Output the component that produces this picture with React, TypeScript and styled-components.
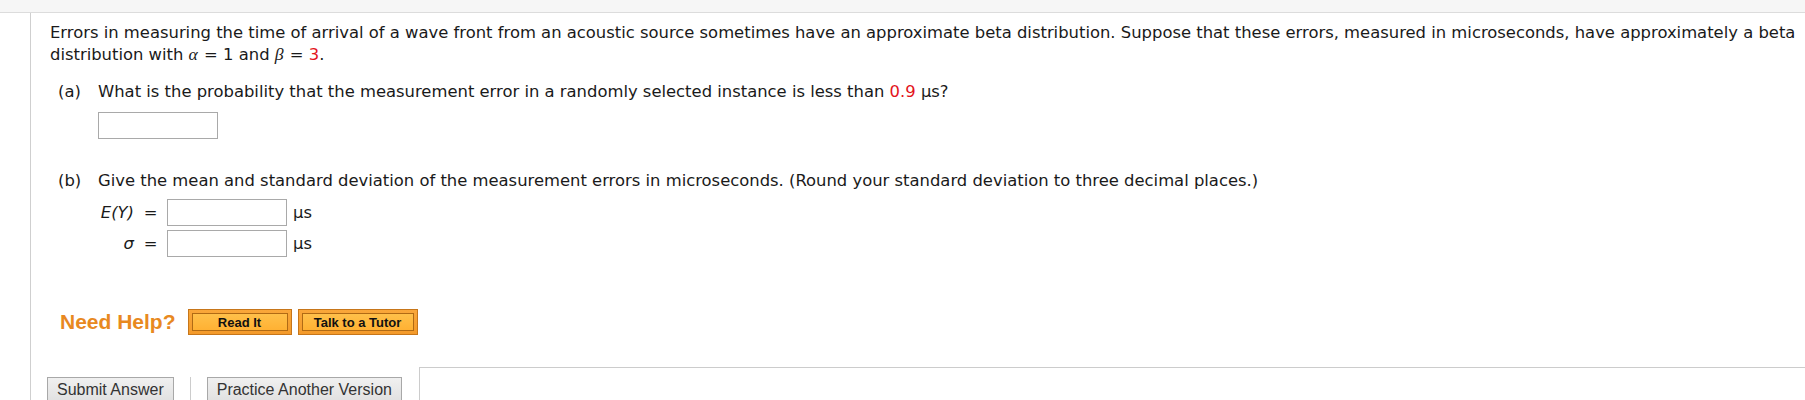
import React from 'react';
import styled, { createGlobalStyle } from 'styled-components';

const GlobalStyle = createGlobalStyle`
  html, body {
    margin: 0;
    padding: 0;
    background: #ffffff;
    overflow: hidden;
  }
  body {
    font-family: "DejaVu Sans", Verdana, sans-serif;
    color: #1a1a1a;
  }
`;

const TopStrip = styled.div`
  height: 12px;
  background: #f6f6f6;
  border-bottom: 1px solid #dcdcdc;
`;

const Main = styled.div`
  display: flex;
  height: 387px;
  overflow: hidden;
`;

const Gutter = styled.div`
  width: 30px;
  flex-shrink: 0;
  border-right: 1px solid #cfcfcf;
`;

const Content = styled.div`
  flex: 1;
  min-width: 0;
  padding: 9px 0 0 19px;
  font-size: 16.4px;
  line-height: 22px;
`;

const Intro = styled.p`
  margin: 0;
`;

const Red = styled.span`
  color: #e3141c;
`;

const Greek = styled.i`
  font-family: "Liberation Serif", "DejaVu Serif", serif;
  font-size: 1.08em;
  line-height: 1;
  padding-right: 1px;
`;

const Part = styled.div<{ $top: number }>`
  display: grid;
  grid-template-columns: 40px 1fr;
  padding-left: 8px;
  margin-top: ${p => p.$top}px;
`;

const PartLabel = styled.div``;

const PartBody = styled.div`
  display: flex;
  flex-direction: column;
  align-items: flex-start;
`;

const AnswerBox = styled.input<{ $top?: number }>`
  box-sizing: border-box;
  width: 120px;
  height: 27px;
  border: 1px solid #a9a9a9;
  margin: ${p => p.$top ?? 0}px 0 0 0;
  padding: 0 4px;
  background: #fff;
  font: inherit;
`;

const AnswerTable = styled.div`
  display: grid;
  grid-template-columns: 36px 33px 120px auto;
  justify-content: start;
  align-items: center;
  row-gap: 4px;
  margin-top: 7px;
`;

const MathLabel = styled.div`
  text-align: right;
  font-style: italic;
  white-space: nowrap;
`;

const Equals = styled.div`
  text-align: center;
`;

const Unit = styled.div`
  padding-left: 6px;
`;

const HelpRow = styled.div`
  display: flex;
  align-items: center;
  margin-top: 52px;
  padding-left: 10px;
  gap: 6px;
`;

const HelpText = styled.span`
  font-family: "Liberation Sans", Arial, sans-serif;
  font-weight: bold;
  font-size: 21px;
  line-height: 26px;
  color: #e8891f;
  margin-right: 6px;
`;

const HelpButton = styled.button<{ $w: number }>`
  box-sizing: border-box;
  width: ${p => p.$w}px;
  height: 26px;
  padding: 3px;
  border: 1px solid #c7761a;
  background: linear-gradient(#f9a73a, #f39a2a);
  cursor: pointer;
  display: flex;
`;

const HelpInner = styled.span`
  flex: 1;
  display: flex;
  align-items: center;
  justify-content: center;
  border: 1px solid #b06a14;
  background: linear-gradient(#ffc04a, #ffb133);
  font-family: "Liberation Sans", Arial, sans-serif;
  font-weight: bold;
  font-size: 13px;
  color: #111;
`;

const ActionRow = styled.div`
  display: flex;
  align-items: flex-start;
  margin-top: 32px;
  margin-left: -3px;
`;

const Actions = styled.div`
  display: flex;
  padding-top: 10px;
`;

const GrayButton = styled.button`
  box-sizing: border-box;
  height: 25px;
  padding: 1px 9px 0;
  border: 1px solid #a8a8a8;
  background: linear-gradient(#f0f0f0, #e1e1e1);
  font-family: "Liberation Sans", Arial, sans-serif;
  font-size: 16px;
  color: #333;
  line-height: 20px;
  cursor: pointer;
`;

const Separator = styled.div`
  width: 1px;
  height: 40px;
  background: #cccccc;
  margin: 0 16px;
`;

const SidePanel = styled.div`
  flex: 1;
  height: 60px;
  margin-left: 17px;
  border-top: 1px solid #cccccc;
  border-left: 1px solid #cccccc;
`;

export default function App() {
  return (
    <>
      <GlobalStyle />
      <TopStrip />
      <Main>
        <Gutter />
        <Content>
          <Intro>
            Errors in measuring the time of arrival of a wave front from an acoustic source sometimes have an
            approximate beta distribution. Suppose that these errors, measured in microseconds, have approximately a beta
            distribution with <Greek>α</Greek> = 1 and <Greek>β</Greek> = <Red>3</Red>.
          </Intro>

          <Part $top={15}>
            <PartLabel>(a)</PartLabel>
            <PartBody>
              <span>
                What is the probability that the measurement error in a randomly selected instance is less than{' '}
                <Red>0.9</Red> μs?
              </span>
              <AnswerBox $top={9} />
            </PartBody>
          </Part>

          <Part $top={31}>
            <PartLabel>(b)</PartLabel>
            <PartBody>
              <span>
                Give the mean and standard deviation of the measurement errors in microseconds. (Round your standard
                deviation to three decimal places.)
              </span>
              <AnswerTable>
                <MathLabel>E(Y)</MathLabel>
                <Equals>=</Equals>
                <AnswerBox />
                <Unit>μs</Unit>
                <MathLabel>σ</MathLabel>
                <Equals>=</Equals>
                <AnswerBox />
                <Unit>μs</Unit>
              </AnswerTable>
            </PartBody>
          </Part>

          <HelpRow>
            <HelpText>Need Help?</HelpText>
            <HelpButton $w={104}>
              <HelpInner>Read It</HelpInner>
            </HelpButton>
            <HelpButton $w={120}>
              <HelpInner>Talk to a Tutor</HelpInner>
            </HelpButton>
          </HelpRow>

          <ActionRow>
            <Actions>
              <GrayButton>Submit Answer</GrayButton>
              <Separator />
              <GrayButton>Practice Another Version</GrayButton>
            </Actions>
            <SidePanel />
          </ActionRow>
        </Content>
      </Main>
    </>
  );
}
